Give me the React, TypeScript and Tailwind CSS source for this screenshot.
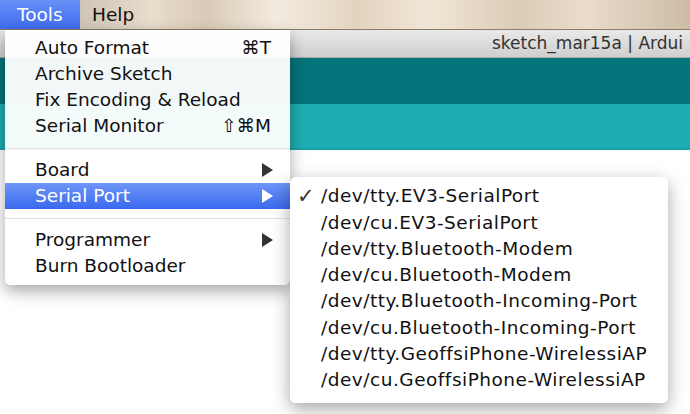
import React from "react";

const font = { fontFamily: '"DejaVu Sans", "Noto Sans", sans-serif' };

function Arrow({ white }: { white?: boolean }) {
  return (
    <svg width="11" height="14" viewBox="0 0 11 14" className="shrink-0">
      <path d="M0 0 L11 7 L0 14 Z" fill={white ? "#ffffff" : "#333333"} />
    </svg>
  );
}

function Item({
  label,
  shortcut,
  arrow,
  active,
}: {
  label: string;
  shortcut?: string;
  arrow?: boolean;
  active?: boolean;
}) {
  return (
    <div
      className={
        active
          ? "flex h-[26px] items-center justify-between pl-[30px] pr-[17px] text-white bg-[linear-gradient(#6e96f8,#3a69ee)]"
          : "flex h-[26px] items-center justify-between pl-[30px] pr-[17px] text-[#111]"
      }
    >
      <span>{label}</span>
      {shortcut && <span className="pr-[2px]">{shortcut}</span>}
      {arrow && <Arrow white={active} />}
    </div>
  );
}

function Sep() {
  return (
    <div className="flex h-[18px] items-center">
      <div className="h-px w-full bg-[#e2e2e2]" />
    </div>
  );
}

const ports = [
  "/dev/tty.EV3-SerialPort",
  "/dev/cu.EV3-SerialPort",
  "/dev/tty.Bluetooth-Modem",
  "/dev/cu.Bluetooth-Modem",
  "/dev/tty.Bluetooth-Incoming-Port",
  "/dev/cu.Bluetooth-Incoming-Port",
  "/dev/tty.GeoffsiPhone-WirelessiAP",
  "/dev/cu.GeoffsiPhone-WirelessiAP",
];

export default function App() {
  return (
    <div
      className="relative h-[414px] w-[690px] overflow-hidden bg-white text-[18.5px]"
      style={font}
    >
      {/* Menu bar */}
      <div className="flex h-[30px] items-center border-b border-[#8a7b68] bg-[linear-gradient(90deg,#a8a49c_0%,#cfc6b8_12%,#e8dccb_22%,#d9cab6_30%,#f3ebdf_40%,#e2d3bf_52%,#f1e6d6_62%,#dccbb6_75%,#e9dccb_85%,#cdbba5_100%)]">
        <div className="flex h-full w-[80px] items-center pl-[17px] text-white bg-[linear-gradient(#6890f6,#3e6cee)]">
          Tools
        </div>
        <div className="ml-[12px] text-[#111]">Help</div>
      </div>

      {/* Window behind */}
      <div className="flex flex-col">
        <div className="flex h-[28px] items-center overflow-hidden whitespace-nowrap border-b border-[#a9a9a9] bg-[linear-gradient(#e9e9e9,#cfcfcf)] pl-[492px] text-[17px] text-[#333]">
          sketch_mar15a | Ardui
        </div>
        <div className="h-[46px] bg-[#04757a]" />
        <div className="h-[46px] border-b-2 border-[#18a2a6] bg-[#1eadb1]" />
        <div className="h-[262px] bg-white" />
      </div>

      {/* Tools menu */}
      <div className="absolute left-[5px] top-[30px] w-[285px] rounded-b-[6px] bg-white/95 pt-[5px] pb-[6px] shadow-[0_6px_16px_rgba(0,0,0,0.35)]">
        <Item label="Auto Format" shortcut="⌘T" />
        <Item label="Archive Sketch" />
        <Item label="Fix Encoding & Reload" />
        <Item label="Serial Monitor" shortcut="⇧⌘M" />
        <Sep />
        <Item label="Board" arrow />
        <Item label="Serial Port" arrow active />
        <Sep />
        <Item label="Programmer" arrow />
        <Item label="Burn Bootloader" />
      </div>

      {/* Serial Port submenu */}
      <div className="absolute left-[290px] top-[177px] w-[378px] rounded-[6px] bg-white/95 pt-[6px] pb-[10px] shadow-[0_6px_18px_rgba(0,0,0,0.35)]">
        {ports.map((p, i) => (
          <div key={p} className="flex h-[26.3px] items-center text-[#111]">
            <span className="w-[31px] pl-[7px] text-[21px] leading-none text-[#333]">
              {i === 0 ? "✓" : ""}
            </span>
            <span className="tracking-[0.5px]">{p}</span>
          </div>
        ))}
      </div>
    </div>
  );
}
